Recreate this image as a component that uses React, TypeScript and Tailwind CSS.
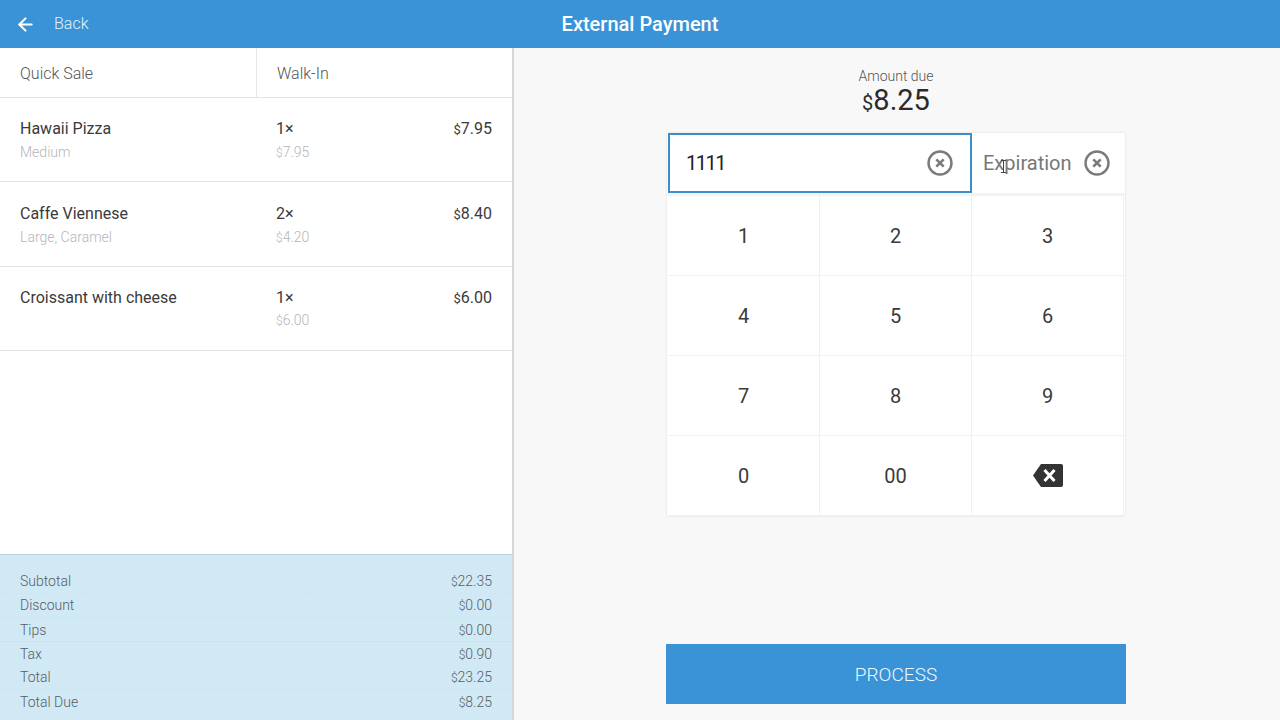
import { ArrowLeft } from 'lucide-react';

const ROBOTO = 'font-[Roboto,sans-serif]';

const items = [
  { name: 'Hawaii Pizza', opts: 'Medium', qty: '1×', unit: '7.95', total: '7.95', top: 'pt-[21px]', gap: 'mt-[4px]' },
  { name: 'Caffe Viennese', opts: 'Large, Caramel', qty: '2×', unit: '4.20', total: '8.40', top: 'pt-[22px]', gap: 'mt-[4px]' },
  { name: 'Croissant with cheese', opts: '', qty: '1×', unit: '6.00', total: '6.00', top: 'pt-[21px]', gap: 'mt-[3px]' },
];

const totals = [
  ['Subtotal', '22.35', 'h-[25px] border-b border-dashed border-[#cbe5f2]'],
  ['Discount', '0.00', 'h-[24px] pb-[2px] border-b border-[#cde6f3]'],
  ['Tips', '0.00', 'h-[24px] border-b border-[#c9e3f1]'],
  ['Tax', '0.90', 'h-[24px]'],
  ['Total', '23.25', 'h-[24px] pb-[2px] border-b border-[#cde6f3]'],
  ['Total Due', '8.25', 'h-[24px]'],
];

const keys = ['1', '2', '3', '4', '5', '6', '7', '8', '9', '0', '00'];

function Money({ value, small }: { value: string; small: string }) {
  return (
    <span>
      <span className={small}>$</span>
      {value}
    </span>
  );
}

function ClearIcon() {
  return (
    <svg width="26" height="26" viewBox="0 0 26 26" fill="none" className="shrink-0">
      <circle cx="13" cy="13" r="11.5" stroke="#7a7a7a" strokeWidth="2.4" />
      <path d="M9.3 9.3l7.4 7.4M16.7 9.3l-7.4 7.4" stroke="#7a7a7a" strokeWidth="2.6" />
    </svg>
  );
}

function BackspaceIcon() {
  return (
    <svg width="30" height="23" viewBox="0 0 30 23" className="block">
      <path d="M8 0h20a2 2 0 0 1 2 2v19a2 2 0 0 1-2 2H8L0 11.500z" fill="#333333" />
      <path d="M11.500 6l10 11M21.500 6l-10 11" stroke="#ffffff" strokeWidth="3" />
    </svg>
  );
}

export default function App() {
  return (
    <div className={`${ROBOTO} flex h-[720px] w-[1280px] flex-col overflow-hidden bg-[#f8f8f8]`}>
      <header className="relative flex h-12 shrink-0 items-center bg-[#3993d6] text-white">
        <div className="flex items-center pl-[15px]">
          <ArrowLeft size={21} strokeWidth={2.4} />
          <span className="ml-[18px] text-base font-light text-[#e4f3fd]">Back</span>
        </div>
        <h1 className="absolute inset-x-0 text-center text-xl font-medium">External Payment</h1>
      </header>

      <div className="flex min-h-0 flex-1">
        <aside className="flex w-[514px] shrink-0 flex-col border-r-2 border-[#d6d6d6] bg-white">
          <div className="flex h-[50px] shrink-0 border-b border-[#e3e3e3] pt-[2px] text-base font-light text-[#555]">
            <div className="-mt-[2px] flex w-[257px] items-center border-r border-[#e6e6e6] pt-[2px] pl-5">Quick Sale</div>
            <div className="flex items-center pl-5">Walk-In</div>
          </div>

          <div className="flex-1">
            {items.map((it) => (
              <div key={it.name} className={`h-[84.300px] border-b border-[#e3e3e3] px-5 ${it.top}`}>
                <div className="flex">
                  <div className="w-[256px]">
                    <div className="text-base leading-5 text-[#3a3a3a]">{it.name}</div>
                    <div className={`h-[19px] text-sm leading-[19px] font-light text-[#b5b5b5] ${it.gap}`}>{it.opts}</div>
                  </div>
                  <div className="w-[120px]">
                    <div className="text-base leading-5 text-[#3a3a3a]">{it.qty}</div>
                    <div className={`text-sm leading-[19px] font-light text-[#b5b5b5] ${it.gap}`}>
                      <Money value={it.unit} small="text-xs" />
                    </div>
                  </div>
                  <div className="flex-1 text-right text-base leading-5 text-[#3a3a3a]">
                    <Money value={it.total} small="text-[13px]" />
                  </div>
                </div>
              </div>
            ))}
          </div>

          <div className="h-[166px] shrink-0 border-t border-[#bcd5e4] bg-[#d1e9f5] pt-[14px]">
            {totals.map(([label, value, cls]) => (
              <div key={label} className={`flex items-center justify-between px-5 text-sm font-light text-[#555e63] ${cls}`}>
                <span>{label}</span>
                <Money value={value} small="text-xs" />
              </div>
            ))}
          </div>
        </aside>

        <main className="flex flex-1 flex-col items-center pr-[2px]">
          <div className="mt-[20px] text-sm leading-4 font-light text-[#555]">Amount due</div>
          <div className="mt-[1px] flex h-[30px] items-baseline font-normal text-[#2b2b2b]">
            <span className="text-xl leading-[30px]">$</span>
            <span className="text-[29px] leading-[30px]">8.25</span>
          </div>

          <div className="mt-[18px] w-[458px] bg-white shadow-[0_0_2px_rgba(0,0,0,0.12)]">
            <div className="flex h-[60px] pl-[1px]">
              <div className="flex w-[304px] items-center justify-between border-2 border-[#3a8fca] pr-[17px] pl-[16px] text-xl tracking-[-1.500px] text-[#222]">
                <span>1111</span>
                <ClearIcon />
              </div>
              <div className="relative flex flex-1 items-center justify-between pr-[15px] pl-[11px] text-xl text-[#777]">
                <span>Expiration</span>
                <ClearIcon />
                <svg width="7" height="13" viewBox="0 0 7 13" className="absolute top-[27px] left-[28px]">
                  <path d="M1 .5h5M1 12.500h5M3.500 .5v12" stroke="#444" strokeWidth="1" fill="none" />
                </svg>
              </div>
            </div>
            <div className="grid grid-cols-[152px_152px_152px] border-t-[3px] border-[#f3f3f3] pl-[1px]">
              {keys.map((k) => (
                <button key={k} className="flex h-20 items-center justify-center border-r border-b border-[#f0f0f0] text-xl text-[#3a3a3a]">
                  {k}
                </button>
              ))}
              <button className="flex h-20 items-center justify-center border-r border-b border-[#f0f0f0]">
                <BackspaceIcon />
              </button>
            </div>
          </div>

          <button className="mt-auto mb-4 h-[60px] w-[460px] bg-[#3993d6] pt-[2px] text-[19px] font-light text-[#eef8ff]">PROCESS</button>
        </main>
      </div>
    </div>
  );
}
